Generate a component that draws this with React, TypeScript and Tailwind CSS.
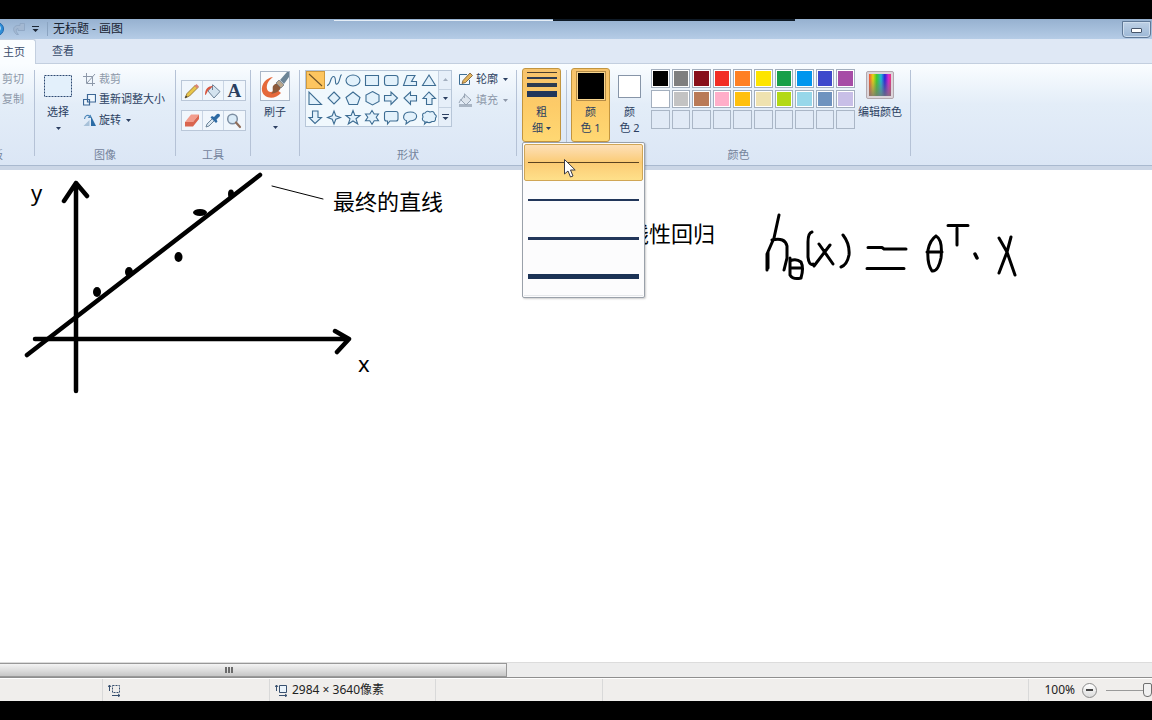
import type { ReactNode } from "react";

const SHAPE_PATHS: { name: string; d: string }[] = [
  { name: "直线", d: "M3 3L16 15" },
  { name: "曲线", d: "M2 14.500C6 14.500 5 5.500 8.500 5.500C12 5.500 9 14 12 13C15 12 14.500 5 16.500 3.500" },
  { name: "椭圆形", d: "M2 9.5A7 5.5 0 1 1 16 9.5A7 5.5 0 1 1 2 9.5Z" },
  { name: "矩形", d: "M2.5 4.5H15.5V14.5H2.5Z" },
  { name: "圆角矩形", d: "M5 4.5H13.5Q16 4.5 16 7V12Q16 14.5 13.5 14.5H5Q2.5 14.5 2.5 12V7Q2.5 4.5 5 4.5Z" },
  { name: "多边形", d: "M6 4.5H14L10.5 10.5H15.5V14.5H2.5Z" },
  { name: "三角形", d: "M9 4L15.5 14.5H2.5Z" },
  { name: "直角三角形", d: "M3 3V15.500H15.500Z" },
  { name: "菱形", d: "M9 3L15 9L9 15L3 9Z" },
  { name: "五边形", d: "M9 3L16 8.500L13.500 15.500H5L2 8.500Z" },
  { name: "六边形", d: "M9.500 2.500L16 6V12.500L9.500 16L3 12.500V6Z" },
  { name: "右箭头", d: "M2.500 6.500H9V3L15.500 9L9 15.500V12H2.500Z" },
  { name: "左箭头", d: "M15.500 6.500H9.500V3L3 9L9.500 15.500V12H15.500Z" },
  { name: "向上箭头", d: "M6.500 15.500V9.500H3L9 3L15.500 9.500H12V15.500Z" },
  { name: "向下箭头", d: "M6.500 3V9.500H3L9 15.500L15.500 9.500H12V3Z" },
  { name: "四角星形", d: "M9 3L10.800 7.700L15.500 9.500L10.800 11.300L9 16L7.200 11.300L2.500 9.500L7.200 7.700Z" },
  { name: "五角星形", d: "M9 2.500L10.900 7.500H16L12 10.800L13.700 16L9 13L4.300 16L6 10.800L2 7.500H7.100Z" },
  { name: "六角星形", d: "M9 2.500L11.200 6H15.500L13.200 9.300L15.500 12.700H11.200L9 16.300L6.800 12.700H2.500L4.800 9.300L2.500 6H6.800Z" },
  { name: "圆角矩形标注", d: "M4.500 3.500H14Q16 3.500 16 5.500V11Q16 13 14 13H8L5.500 16V13H4.500Q2.500 13 2.500 11V5.500Q2.500 3.500 4.500 3.500Z" },
  { name: "椭圆形标注", d: "M5.500 12.800C1 11 1.500 4 9.500 4S18 12.500 9 13L5 16Z" },
  { name: "云形标注", d: "M5 13.500Q1 12.500 3 9Q1.500 5 5 5Q7 2 10 4Q14 2.500 14.500 6Q17.500 8 15.500 10Q16 14 12 13.500Q9 15.500 7 13.800L4.500 16Z" },
];

const SWATCHES: { name: string; cls: string }[] = [
  { name: "黑色", cls: "bg-black" },
  { name: "灰色-50%", cls: "bg-[#7f7f7f]" },
  { name: "深红色", cls: "bg-[#880f1a]" },
  { name: "红色", cls: "bg-[#f22d24]" },
  { name: "橙色", cls: "bg-[#ff8022]" },
  { name: "黄色", cls: "bg-[#fde500]" },
  { name: "绿色", cls: "bg-[#189f48]" },
  { name: "青绿", cls: "bg-[#0096ee]" },
  { name: "靛蓝", cls: "bg-[#3d48cc]" },
  { name: "紫色", cls: "bg-[#a64ca6]" },
  { name: "白色", cls: "bg-white" },
  { name: "灰色-25%", cls: "bg-[#c3c3c3]" },
  { name: "褐色", cls: "bg-[#b97a57]" },
  { name: "玫瑰色", cls: "bg-[#ffaec9]" },
  { name: "金色", cls: "bg-[#ffc00e]" },
  { name: "浅黄色", cls: "bg-[#efe2b0]" },
  { name: "酸橙色", cls: "bg-[#b3d916]" },
  { name: "淡青绿色", cls: "bg-[#97d7ea]" },
  { name: "蓝灰色", cls: "bg-[#6f93bf]" },
  { name: "淡紫色", cls: "bg-[#c8bfe7]" },
];

const WIDTHS: { label: string; line: string }[] = [
  { label: "1px", line: "h-px bg-[#5b4320]" },
  { label: "3px", line: "h-[2px] bg-[#22365a]" },
  { label: "5px", line: "h-[3px] bg-[#22365a]" },
  { label: "8px", line: "h-[5px] bg-[#1b3255]" },
];

function Caret({ className = "" }: { className?: string }) {
  return (
    <svg width="5" height="3" viewBox="0 0 5 3" className={className} aria-hidden="true">
      <path d="M0 0H5L2.5 3Z" fill="currentColor" />
    </svg>
  );
}

function Group({ label, className, children }: { label: string; className: string; children: ReactNode }) {
  return (
    <section aria-label={label} className={`flex shrink-0 flex-col ${className}`}>
      <div className="flex-1">{children}</div>
      <div className="h-[17px] text-center leading-[14px] text-[#74839b]">{label}</div>
    </section>
  );
}

function Divider() {
  return <div className="mt-[6px] h-[86px] w-px shrink-0 bg-[#b5c2d6]" />;
}

function TitleBar() {
  return (
    <header className="relative flex h-[20px] items-center bg-linear-to-b from-[#96b1d0] to-[#b5cce6] text-[12px] text-[#1a2433]">
      <div className="absolute inset-x-0 top-0 flex h-[2px] items-end" aria-hidden="true">
        <div className="ml-[29%] h-px w-[19%] bg-[#e4edf6]" />
        <div className="h-[2px] w-[21%] bg-[#0f1a26]" />
      </div>
      <button aria-label="撤消" className="flex w-[4px] justify-end overflow-hidden">
        <svg width="14" height="14" viewBox="0 0 14 14" className="shrink-0">
          <circle cx="7" cy="7" r="6.5" fill="#2f8fd8" stroke="#1d66ae" />
          <path d="M9 4A4 4 0 0 1 7 10" fill="none" stroke="#d8f0ff" strokeWidth="2" />
        </svg>
      </button>
      <button aria-label="重做" className="ml-2">
        <svg width="13" height="14" viewBox="0 0 13 14">
          <path d="M4.500 12.500C-1 7.500 2 2.500 8 3.500V1.500H12.500V8.500H6V6.500C3.500 6.500 3.500 9.500 6.500 12.500Z" fill="#a3b8d2" stroke="#8da5c2" strokeWidth="0.800" />
        </svg>
      </button>
      <button aria-label="自定义快速访问工具栏" className="ml-[7px]">
        <svg width="7" height="6" viewBox="0 0 7 6">
          <path d="M0 0H7V1H0ZM0.500 3H6.500L3.500 6Z" fill="#1c2736" />
        </svg>
      </button>
      <div className="ml-[8px] h-[14px] w-px bg-[#8ba4c1]" />
      <h1 className="ml-[5px] leading-[18px]">无标题 - 画图</h1>
      <button
        aria-label="最小化"
        className="ml-auto flex h-[17px] w-[29px] items-center justify-center rounded-b-sm border border-[#5f7896] bg-linear-to-b from-[#bdd0e5] to-[#9db8d6] shadow-[inset_0_0_0_1px_#cfdeee]"
      >
        <span className="mt-[2px] h-[5px] w-[11px] rounded-[1px] border border-[#47566b] bg-white" />
      </button>
      <div className="w-px" />
    </header>
  );
}

function Tabs() {
  return (
    <nav className="flex h-[25px] border-b border-[#c3cfdf] bg-[#dfe8f5] text-[#3a4c6b]">
      <button className="-mb-px w-[36px] rounded-tr-[3px] border-t border-r border-[#c3cfdf] bg-[#fafdff] pr-[10px] text-right">主页</button>
      <button className="ml-[16px]">查看</button>
    </nav>
  );
}

function ClipboardGroup() {
  return (
    <section aria-label="剪贴板" className="flex w-[34px] shrink-0 flex-col overflow-hidden text-[#8d98a9]">
      <div className="flex flex-1 flex-col items-start pt-[5px] pl-[2px]">
        <button className="h-[20px]" disabled>剪切</button>
        <button className="h-[20px]" disabled>复制</button>
      </div>
      <div className="flex h-[17px] justify-end pr-[31px] leading-[14px] whitespace-nowrap text-[#74839b]">剪贴板</div>
    </section>
  );
}

function ImageGroup() {
  return (
    <Group label="图像" className="w-[140px]">
      <div className="flex pt-[5px] pl-[8px]">
        <button className="flex w-[30px] flex-col items-center pt-[5px]">
          <svg width="30" height="24" viewBox="0 0 30 24">
            <rect x="1.500" y="1.500" width="27" height="21" fill="#e3f0fb" stroke="#2e4a73" strokeDasharray="2 1" />
          </svg>
          <span className="mt-[7px] leading-[14px] whitespace-nowrap">选择</span>
          <Caret className="mt-[8px]" />
        </button>
        <div className="ml-[10px] flex flex-col items-start whitespace-nowrap">
          <button className="flex h-[20px] items-center gap-[3px] text-[#8d98a9]" disabled>
            <svg width="13" height="13" viewBox="0 0 13 13" fill="none" stroke="#8d98a9">
              <path d="M3.500 0V10.500H12M0 3.500H9.500V13M4 10L12 1" />
            </svg>
            裁剪
          </button>
          <button className="flex h-[21px] items-center gap-[3px]">
            <svg width="13" height="13" viewBox="0 0 13 13" fill="#eef6fd" stroke="#3c6796" strokeWidth="1.200">
              <path d="M4.500 1.500H12.500V9H4.500ZM0.500 6.500H6.500V12H0.500Z" />
            </svg>
            重新调整大小
          </button>
          <button className="flex h-[20px] items-center gap-[3px]">
            <svg width="13" height="13" viewBox="0 0 13 13">
              <path d="M8 2V12H13Z" fill="#2b6ca5" />
              <path d="M6.500 6V12H0.500Z" fill="#a7c1d9" />
              <path d="M1.500 5C2 1 5 0.500 7 2.500" fill="none" stroke="#4d87b9" strokeWidth="1.200" />
              <path d="M8 0.500V4H4.500Z" fill="#4d87b9" />
            </svg>
            旋转
            <Caret className="ml-[2px]" />
          </button>
        </div>
      </div>
    </Group>
  );
}

const toolRow = "flex h-[21px] w-[65px] divide-x divide-[#c9d5e4] border border-[#bac7d8] bg-[#f0f6fc]";
const toolButton = "flex flex-1 items-center justify-center";

function ToolsGroup() {
  return (
    <Group label="工具" className="w-[74px]">
      <div className="flex flex-col items-center gap-[9px] pt-[16px]">
        <div className={toolRow}>
          <button aria-label="铅笔" className={toolButton}>
            <svg width="16" height="16" viewBox="0 0 16 16">
              <path d="M1 15L3 10.500L11.500 2L14 4.500L5.500 13Z" fill="#e8c64b" stroke="#8a6a2c" strokeWidth="0.800" />
              <path d="M10.500 3L13 5.500L15 3.500L12.500 1Z" fill="#d98577" />
              <path d="M1 15L2 12.500L3.500 14Z" fill="#333" />
            </svg>
          </button>
          <button aria-label="用颜色填充" className={toolButton}>
            <svg width="17" height="16" viewBox="0 0 17 16">
              <path d="M9 2L16 8.500L10 15L4 8Z" fill="#d4e3ef" stroke="#6d8297" />
              <path d="M8.500 7V1.500" stroke="#6d8297" />
              <path d="M9 3C4 3 1 6 1 12C3 12 3 7 6 6Z" fill="#d8563f" />
            </svg>
          </button>
          <button aria-label="文本" className={toolButton}>
            <span className="font-['Liberation_Serif',serif] text-[19px] leading-[18px] font-bold text-[#2a3f5f]">A</span>
          </button>
        </div>
        <div className={toolRow}>
          <button aria-label="橡皮擦" className={toolButton}>
            <svg width="16" height="15" viewBox="0 0 16 15">
              <path d="M1 9L7 1.500H15L9 9Z" fill="#f29c8c" />
              <path d="M1 9H9V13.500H1ZM9 9L15 1.500V6L9 13.500Z" fill="#d9654f" />
            </svg>
          </button>
          <button aria-label="颜色选取器" className={toolButton}>
            <svg width="16" height="15" viewBox="0 0 16 15">
              <path d="M1 14L2 11L7.500 5.500L9.500 7.500L4 13Z" fill="#dbe8f2" stroke="#60798f" strokeWidth="0.900" />
              <path d="M7 3L9 4L12 1Q15 0 15 3L11.500 6.500L12.500 8.500L11 10L5.500 4.500Z" fill="#2d6aa3" />
            </svg>
          </button>
          <button aria-label="放大镜" className={toolButton}>
            <svg width="16" height="16" viewBox="0 0 16 16">
              <circle cx="6.500" cy="6" r="4.800" fill="#d9ebf8" stroke="#7d8fa3" strokeWidth="1.500" />
              <path d="M10 9.500L14 14" stroke="#8f6d5a" strokeWidth="2.200" strokeLinecap="round" />
            </svg>
          </button>
        </div>
      </div>
    </Group>
  );
}

function BrushesGroup() {
  return (
    <section aria-label="刷子" className="flex w-[48px] shrink-0 justify-center">
      <button className="flex flex-col items-center justify-start pt-[7px]">
        <svg width="30" height="30" viewBox="0 0 30 30">
          <rect x="0.500" y="0.500" width="29" height="29" fill="#f9fbfd" stroke="#a9b6c7" />
          <path d="M13 6C6 7 1 13 2 20C4 28 15 29 21 22L16 18C13 22 8 22 7 18C6 13 9 9 13 6Z" fill="#e5683a" />
          <path d="M13 15C16 11 20 12 21 16C20 20 16 22 11 23C14 20 12 18 13 15Z" fill="#8c5a3b" />
          <path d="M16 12L19 9L24 14L21 17Z" fill="#b9a68c" stroke="#66737f" strokeWidth="0.700" />
          <path d="M20 9L27 1H29V6L24 13Z" fill="#6b8496" />
        </svg>
        <span className="mt-[4px] leading-[14px]">刷子</span>
        <Caret className="mt-[7px]" />
      </button>
    </section>
  );
}

function ShapesGroup() {
  return (
    <Group label="形状" className="w-[216px]">
      <div className="flex pt-[6px] pl-[5px]">
        <div className="flex h-[57px] w-[147px] border border-[#b7c6d8] bg-[#f0f8fd]">
          <div className="grid flex-1 grid-cols-7 grid-rows-3">
            {SHAPE_PATHS.map((shape, i) => (
              <button
                key={shape.name}
                aria-label={shape.name}
                className={
                  i === 0
                    ? "flex items-center justify-center border border-[#cf9a3f] bg-[#fdc55f]"
                    : "flex items-center justify-center"
                }
              >
                <svg width="18" height="18" viewBox="0 0 18 18" className="shrink-0">
                  <path d={shape.d} fill={i < 2 ? "none" : "#e2f1fb"} stroke={i === 0 ? "#6e5228" : "#3d6d93"} strokeWidth="1.100" />
                </svg>
              </button>
            ))}
          </div>
          <div className="flex w-[13px] flex-col divide-y divide-[#c5d2e1] border-l border-[#c5d2e1] bg-[#e6eff9]">
            <button aria-label="向上滚动" className="flex flex-1 items-center justify-center text-[#a3afbf]">
              <Caret className="rotate-180" />
            </button>
            <button aria-label="向下滚动" className="flex flex-1 items-center justify-center">
              <Caret />
            </button>
            <button aria-label="更多形状" className="flex flex-1 items-center justify-center">
              <svg width="7" height="6" viewBox="0 0 7 6">
                <path d="M0 0H7V1H0ZM0.500 3H6.500L3.500 6Z" fill="currentColor" />
              </svg>
            </button>
          </div>
        </div>
        <div className="ml-[6px] flex flex-col items-start pt-px whitespace-nowrap">
          <button className="flex h-[16px] items-center gap-[3px]">
            <svg width="15" height="14" viewBox="0 0 15 14">
              <path d="M9 2.500H1.500V12.500H11.500V8" fill="#f2f9fe" stroke="#3d6d93" />
              <path d="M4 11.500L5 8.500L12 1L14.500 3.500L7.500 10.500Z" fill="#e3b45d" stroke="#75552b" strokeWidth="0.800" />
            </svg>
            轮廓
            <Caret className="ml-[2px]" />
          </button>
          <button className="mt-[5px] flex h-[16px] items-center gap-[3px] text-[#8d98a9]" disabled>
            <svg width="15" height="14" viewBox="0 0 15 14">
              <path d="M1 11H14V14H1Z" fill="#a9b5c4" />
              <path d="M7 1.500L13 7L8 12L3 7Z" fill="#dde5ee" stroke="#98a5b5" />
              <path d="M6.500 5V0.500M3 6L1 10" stroke="#98a5b5" fill="none" />
            </svg>
            填充
            <Caret className="ml-[2px]" />
          </button>
        </div>
      </div>
    </Group>
  );
}

const pressed = "rounded-[3px] border border-[#c2953f] bg-linear-to-b from-[#f7c36c] via-[#fdcb68] to-[#ffd873]";

function SizeGroup() {
  return (
    <section aria-label="粗细" className="relative w-[49px] shrink-0 pt-[4px] pl-[5px]">
      <button aria-expanded="true" className={`flex h-[74px] w-[39px] flex-col items-center ${pressed}`}>
        <span className="mt-[3px] flex w-[30px] flex-col gap-[4px]">
          <span className="h-px bg-[#4c3f2d]" />
          <span className="h-[2px] bg-[#2e3b50]" />
          <span className="h-[4px] bg-[#2e3b50]" />
          <span className="h-[6px] bg-[#22365a]" />
        </span>
        <span className="mt-[7px] leading-[16px]">粗</span>
        <span className="flex items-center gap-[3px] leading-[16px]">
          细
          <Caret />
        </span>
      </button>
      <ul
        role="menu"
        className="absolute top-[78px] left-[5px] z-20 w-[123px] rounded-[2px] border border-[#9aa1aa] bg-[#fcfcfd] p-px shadow-[1px_1px_2px_rgba(0,0,0,0.2)]"
      >
        {WIDTHS.map((w, i) => (
          <li key={w.label} role="none">
            <button
              role="menuitem"
              aria-label={w.label}
              className={
                i === 0
                  ? "flex h-[37px] w-full items-center rounded-[2px] border border-[#d0a655] bg-linear-to-b from-[#fde0b8] via-[#fbcb74] to-[#fee08a] px-[3px]"
                  : "flex h-[38px] w-full items-center px-[4px]"
              }
            >
              <span className={`w-full ${w.line}`} />
            </button>
          </li>
        ))}
        <li role="separator" className="h-px bg-[#e6e8eb]" />
      </ul>
      <svg
        width="12"
        height="19"
        viewBox="0 0 12 19"
        className="pointer-events-none absolute top-[95px] left-[47px] z-30"
        aria-hidden="true"
      >
        <path d="M0.500 0.500V15L4 12L6.500 18L9 17L6.500 11H11.200Z" fill="#fff" stroke="#3a3a44" />
      </svg>
    </section>
  );
}

function ColorsGroup() {
  return (
    <Group label="颜色" className="w-[343px]">
      <div className="flex pt-[4px] pl-[4px]">
        <button className={`flex h-[74px] w-[39px] flex-col items-center ${pressed}`}>
          <span className="mt-[2px] h-[30px] w-[30px] border border-[#b58c47] bg-black shadow-[inset_0_0_0_1px_#f8d58e]" />
          <span className="mt-[3px] leading-[16px]">颜</span>
          <span className="leading-[16px]">色 1</span>
        </button>
        <button className="flex h-[74px] w-[39px] flex-col items-center pt-px">
          <span className="mt-[6px] h-[23px] w-[23px] border border-[#8795a8] bg-white" />
          <span className="mt-[6px] leading-[16px]">颜</span>
          <span className="leading-[16px]">色 2</span>
        </button>
        <div className="mt-px ml-[2px] grid h-[60px] w-[204px] grid-cols-10 grid-rows-3 gap-[2px]">
          {SWATCHES.map((s) => (
            <button key={s.name} aria-label={s.name} className="border border-[#a3afbe] bg-white p-px">
              <span className={`block h-full w-full ${s.cls}`} />
            </button>
          ))}
          {Array.from({ length: 10 }, (_, i) => (
            <button key={i} aria-label={`自定义颜色 ${i + 1}`} className="border border-[#aab6c6] bg-[#e1eaf6]" />
          ))}
        </div>
        <button className="ml-[2px] flex w-[46px] flex-col items-center pt-[3px]">
          <span className="h-[28px] w-[28px] rounded-[2px] border border-[#b2a8ae] bg-[#dcd5da] p-[2px]">
            <svg width="22" height="22" viewBox="0 0 22 22">
              <defs>
                <linearGradient id="hue">
                  <stop offset="0" stopColor="#f0503c" />
                  <stop offset="0.180" stopColor="#e8d414" />
                  <stop offset="0.350" stopColor="#3ecb2d" />
                  <stop offset="0.550" stopColor="#1fb6d8" />
                  <stop offset="0.720" stopColor="#2a23d8" />
                  <stop offset="0.880" stopColor="#d326d0" />
                  <stop offset="1" stopColor="#e83a78" />
                </linearGradient>
                <linearGradient id="shade" x1="0" y1="0" x2="0" y2="1">
                  <stop offset="0.200" stopColor="#777" stopOpacity="0" />
                  <stop offset="1" stopColor="#777" stopOpacity="0.800" />
                </linearGradient>
              </defs>
              <rect width="22" height="22" fill="url(#hue)" />
              <rect width="22" height="22" fill="url(#shade)" />
            </svg>
          </span>
          <span className="mt-[6px] leading-[14px] whitespace-nowrap">编辑颜色</span>
        </button>
      </div>
    </Group>
  );
}

function Ribbon() {
  return (
    <div className="relative z-10 flex h-[102px] border-b border-[#a9b9cf] bg-linear-to-b from-[#fafdff] via-[#e3edf8] via-40% to-[#dbe6f5]">
      <ClipboardGroup />
      <Divider />
      <ImageGroup />
      <Divider />
      <ToolsGroup />
      <Divider />
      <BrushesGroup />
      <Divider />
      <ShapesGroup />
      <Divider />
      <SizeGroup />
      <Divider />
      <ColorsGroup />
      <Divider />
    </div>
  );
}

function Canvas() {
  return (
    <main className="relative flex-1 overflow-hidden bg-white text-[22px] leading-[28px] text-black">
      <svg width="1060" height="240" viewBox="0 170 1060 240" className="absolute top-0 left-0" fill="none" stroke="#000" strokeLinecap="round" strokeLinejoin="round">
        <g strokeWidth="4.500">
          <path d="M76 183V391M64 201L76 183L87 196" />
          <path d="M35 339H349M335 331L349 339L337 352" />
          <path d="M27 355L260 175" />
        </g>
        <path d="M272 186L323 199" strokeWidth="1" />
        <g fill="#000" stroke="none">
          <ellipse cx="97" cy="292" rx="4" ry="5" />
          <ellipse cx="129" cy="272" rx="4" ry="5" />
          <ellipse cx="178.500" cy="257" rx="4" ry="5" />
          <ellipse cx="200" cy="212.500" rx="7" ry="3.500" />
          <ellipse cx="231" cy="194" rx="3" ry="4.500" />
        </g>
        <g strokeWidth="3">
          <path d="M779 215L774 238L767 254V270M768 252V268M772 240Q785 237 787 246V258L784 270" />
          <path d="M790 258V275Q793 280 801 278Q804 268 801 262Q796 258 790 261M790 268H801" />
          <path d="M812 232Q808 233 808 242V257Q809 266 813 264M819 244L833 264M830 245L814 266M843 235Q850 244 849 255Q847 265 841 267" />
          <path d="M868 247.500H882L884 249H906M867 268.500H904" />
          <path d="M936 236Q930 240 928 250Q927 264 932 271Q938 272 941 258Q943 240 936 236M927 252H942" />
          <path d="M948 225.500H968M957 228V245" />
          <path d="M975 254L977 258" strokeWidth="3.500" />
          <path d="M999 238L1007 252L1015 275M1011 237L1007 252L999 273" />
        </g>
      </svg>
      <p className="absolute top-[8px] left-[31px]">y</p>
      <p className="absolute top-[179px] left-[358px]">x</p>
      <p className="absolute top-[17px] left-[333px] whitespace-nowrap">最终的直线</p>
      <p className="absolute top-[49px] left-[627px] whitespace-nowrap">线性回归</p>
    </main>
  );
}

function ScrollBar() {
  return (
    <div className="flex h-[16px] border-t border-b border-t-[#dcdcdc] border-b-[#8f8f8f] bg-[#ededed]">
      <div className="flex h-[14px] w-[44%] items-center justify-center border border-l-0 border-[#989898] bg-linear-to-b from-[#f4f4f4] via-[#dedede] to-[#c6c6c6] pr-[48px]">
        <div className="flex gap-px">
          <span className="h-[6px] w-[2px] bg-[#6b6b6b]" />
          <span className="h-[6px] w-[2px] bg-[#6b6b6b]" />
          <span className="h-[6px] w-[2px] bg-[#6b6b6b]" />
        </div>
      </div>
    </div>
  );
}

function StatusBar() {
  return (
    <footer className="flex h-[23px] items-stretch border-t border-white bg-[#f0eeec] text-[12px] text-[#222]">
      <div className="w-[103px] shrink-0 border-r border-[#d9d9d9]" />
      <div className="flex w-[167px] shrink-0 items-center border-r border-[#d9d9d9] pl-[5px]">
        <svg width="13" height="13" viewBox="0 0 13 13" fill="none" stroke="#38506f">
          <path d="M1.500 7V1M0 3L1.500 1L3 3M4 11.500H12M10 10L12 11.500L10 13" />
          <path d="M4.500 1.500H11.500V8.500H4.500Z" strokeDasharray="2 1" />
        </svg>
      </div>
      <div className="flex w-[166px] shrink-0 items-center gap-[5px] border-r border-[#d9d9d9] pl-[5px]">
        <svg width="12" height="13" viewBox="0 0 12 13" fill="none" stroke="#38506f">
          <path d="M1.500 7V1M0 3L1.500 1L3 3M4 11.500H12M10 10L12 11.500L10 13" />
          <path d="M4.500 1.500H11.500V8.500H4.500Z" fill="#eaf3fb" />
        </svg>
        <span>2984 × 3640像素</span>
      </div>
      <div className="w-[167px] shrink-0 border-r border-[#d9d9d9]" />
      <div className="ml-auto flex items-center border-l border-[#d9d9d9] pl-[15px]">
        <span>100%</span>
        <button aria-label="缩小" className="ml-[7px] flex h-[15px] w-[15px] items-center justify-center rounded-full border border-[#8b8b8b] bg-linear-to-b from-white to-[#dcdcdc]">
          <span className="h-[2px] w-[7px] bg-[#444]" />
        </button>
        <input
          type="range"
          aria-label="缩放"
          defaultValue="100"
          className="ml-[9px] h-[15px] w-[46px] appearance-none bg-[linear-gradient(#9a9a9a,#9a9a9a)] bg-[length:100%_1px] bg-center bg-no-repeat [&::-webkit-slider-thumb]:h-[14px] [&::-webkit-slider-thumb]:w-[9px] [&::-webkit-slider-thumb]:appearance-none [&::-webkit-slider-thumb]:rounded-b-[4px] [&::-webkit-slider-thumb]:rounded-t-[2px] [&::-webkit-slider-thumb]:border [&::-webkit-slider-thumb]:border-[#707070] [&::-webkit-slider-thumb]:bg-[#f1f1f1]"
        />
      </div>
    </footer>
  );
}

export default function App() {
  return (
    <div className="flex min-h-screen flex-col overflow-x-hidden bg-black font-['Noto_Sans','Noto_Sans_CJK_SC',sans-serif] text-[11px] text-[#2b3f61]">
      <div className="h-[19px] shrink-0" />
      <TitleBar />
      <Tabs />
      <Ribbon />
      <div className="h-[4px] bg-[#cbd6e6]" />
      <Canvas />
      <ScrollBar />
      <StatusBar />
      <div className="h-[19px] shrink-0" />
    </div>
  );
}
